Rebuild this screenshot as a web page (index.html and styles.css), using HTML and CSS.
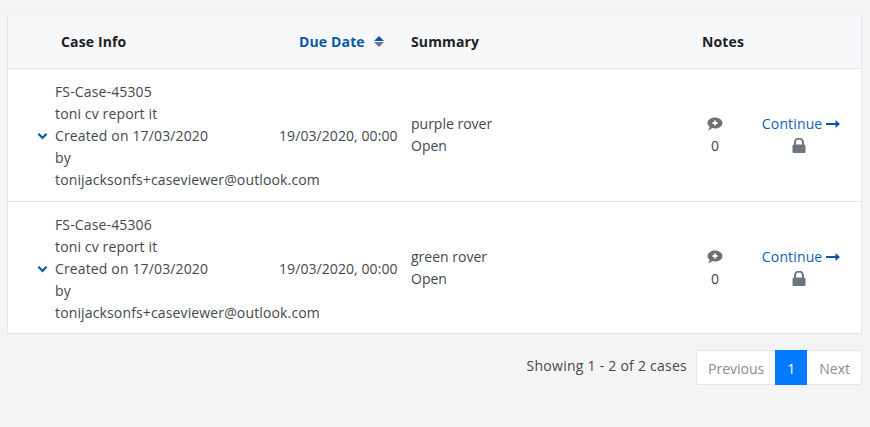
FILE: index.html
```html
<!DOCTYPE html>
<html lang="en">
<head>
    <meta charset="UTF-8">
    <meta name="viewport" content="width=device-width, initial-scale=1.0">
    <title>Cases</title>
    <link rel="stylesheet" href="styles.css">
</head>
<body>
    <svg class="defs" width="0" height="0">
      <symbol id="chevron" viewBox="0 0 12 8"><path d="M1.500 1.500 6 6l4.500-4.500" fill="none" stroke="currentColor" stroke-width="2.400"/></symbol>
      <symbol id="comment" viewBox="0 0 16 14"><path d="M8 0.500c4.200 0 7.500 2.500 7.500 5.500S12.200 11.500 8 11.500c-1 0-1.900-.1-2.800-.4C4 12.300 2.500 13.300 .8 13.500c1-1 1.700-2.200 1.900-3.700C1.300 8.800 .5 7.500 .5 6 .5 3 3.800.5 8 .5z" fill="currentColor"/><path d="M8 3.500v5M5.500 6h5" stroke="#fff" stroke-width="1.800"/></symbol>
      <symbol id="arrow" viewBox="0 0 14 10"><path d="M0 4h9.500V1L14 5 9.500 9V6H0z" fill="currentColor"/></symbol>
      <symbol id="lock" viewBox="0 0 14 15"><path d="M3 7V4.500a4 4 0 0 1 8 0V7" fill="none" stroke="currentColor" stroke-width="2"/><rect x="0.500" y="6.500" width="13" height="8.500" rx="1.500" fill="currentColor"/></symbol>
    </svg>

    <div class="card">
      <table class="cases">
        <colgroup>
          <col class="col-toggle"><col class="col-info"><col class="col-due"><col class="col-summary"><col class="col-notes"><col class="col-action">
        </colgroup>
        <thead>
          <tr>
            <th></th>
            <th class="head-info">Case Info</th>
            <th class="head-due">Due Date
              <span class="sort"><span class="sort-up"></span><span class="sort-down"></span></span>
            </th>
            <th>Summary</th>
            <th class="head-notes">Notes</th>
            <th></th>
          </tr>
        </thead>
        <tbody>
          <tr>
            <td class="toggle"><svg class="icon-chevron"><use href="#chevron"/></svg></td>
            <td class="info">FS-Case-45305<br>toni cv report it<br>Created on 17/03/2020<br>by<br>tonijacksonfs+caseviewer@outlook.com</td>
            <td class="due">19/03/2020, 00:00</td>
            <td class="summary">purple rover<br>Open</td>
            <td class="notes"><svg class="icon-comment"><use href="#comment"/></svg><br>0</td>
            <td class="action"><a href="#">Continue <svg class="icon-arrow"><use href="#arrow"/></svg></a><br><svg class="icon-lock"><use href="#lock"/></svg></td>
          </tr>
          <tr>
            <td class="toggle"><svg class="icon-chevron"><use href="#chevron"/></svg></td>
            <td class="info">FS-Case-45306<br>toni cv report it<br>Created on 17/03/2020<br>by<br>tonijacksonfs+caseviewer@outlook.com</td>
            <td class="due">19/03/2020, 00:00</td>
            <td class="summary">green rover<br>Open</td>
            <td class="notes"><svg class="icon-comment"><use href="#comment"/></svg><br>0</td>
            <td class="action"><a href="#">Continue <svg class="icon-arrow"><use href="#arrow"/></svg></a><br><svg class="icon-lock"><use href="#lock"/></svg></td>
          </tr>
        </tbody>
      </table>
    </div>

    <div class="footer">
      <span class="showing">Showing 1 - 2 of 2 cases</span>
      <div class="pager">
        <a href="#">Previous</a>
        <a href="#" class="active">1</a>
        <a href="#" class="next">Next</a>
      </div>
    </div>
</body>
</html>
```

FILE: styles.css
```css
body {
  font-family: "Open Sans", "Noto Sans", sans-serif;
  font-size: 14px;
  line-height: 22px;
  letter-spacing: 0.14px;
  color: #43484d;
  background: #f4f4f5;
  margin: 0;
  padding: 14px 8px 0 7px;
}
.defs {
  position: absolute;
}
.card {
  background: #fff;
  border: 1px solid #e3e6ec;
  border-top-color: #eceef1;
}
.cases {
  width: 100%;
  border-collapse: collapse;
  table-layout: fixed;
}
.col-toggle { width: 47px; }
.col-info { width: 224px; }
.col-due { width: 132px; }
.col-summary { width: 270px; }
.col-notes { width: 68px; }
.cases th {
  height: 53px;
  padding: 0;
  text-align: left;
  font-weight: 700;
  color: #1d2125;
  background: #f7f8fa;
  border-bottom: 1px solid #e3e6ec;
}
.head-info {
  padding-left: 6px !important;
}
.head-due {
  color: #0b57a8 !important;
  padding-left: 20px !important;
}
.head-notes {
  padding-left: 21px !important;
  overflow: visible;
  white-space: nowrap;
}
.sort {
  display: inline-flex;
  flex-direction: column;
  gap: 1px;
  margin-left: 5px;
  vertical-align: 1px;
  transform: translateY(-5px);
}
.sort-up, .sort-down {
  width: 0;
  height: 0;
  border-left: 5px solid transparent;
  border-right: 5px solid transparent;
}
.sort-up {
  border-bottom: 5px solid #0b57a8;
}
.sort-down {
  border-top: 5px solid #6c757d;
}
.cases td {
  padding: 11px 0;
  vertical-align: middle;
}
.cases td.info, .cases td.due, .cases td.toggle {
  padding: 12px 0 10px;
}
.cases tbody tr + tr td {
  border-top: 1px solid #e3e6ec;
  padding: 11px 0 10px;
}
.cases tbody tr + tr td.info, .cases tbody tr + tr td.due, .cases tbody tr + tr td.toggle {
  padding: 12px 0 9px;
}
.toggle {
  text-align: right;
  color: #0b57a8;
}
.icon-chevron {
  width: 11px;
  height: 8px;
  display: inline-block;
  vertical-align: 1px;
  margin-right: 7px;
}
.due {
  white-space: nowrap;
  letter-spacing: 0.08px;
}
.summary {
  letter-spacing: 0;
}
.notes {
  text-align: center;
}
.icon-comment {
  width: 16px;
  height: 14px;
  color: #6c6f73;
  vertical-align: -2px;
}
.action {
  text-align: center;
  padding-right: 8px !important;
  white-space: nowrap;
}
.action a {
  color: #0b63b8;
  text-decoration: none;
}
.icon-arrow {
  width: 14px;
  height: 10px;
  color: #0b57a8;
}
.icon-lock {
  width: 14px;
  height: 15px;
  color: #6c757d;
  vertical-align: -2px;
  margin-right: 5px;
}
.footer {
  display: flex;
  justify-content: flex-end;
  align-items: center;
  gap: 9px;
  margin-top: 16px;
}
.showing {
  margin-top: -3px;
  letter-spacing: 0.25px;
}
.pager {
  display: flex;
  height: 33px;
  background: #fff;
  border: 1px solid #e3e6ec;
  border-radius: 3px;
  letter-spacing: 0;
}
.pager a {
  padding: 0 11px;
  line-height: 36px;
  color: #868e96;
  text-decoration: none;
}
.pager .active {
  margin: -1px 0;
  padding: 0 12px;
  line-height: 38px;
  color: #fff;
  background: #007bff;
}
.pager .next {
  padding-left: 12px;
}
```
